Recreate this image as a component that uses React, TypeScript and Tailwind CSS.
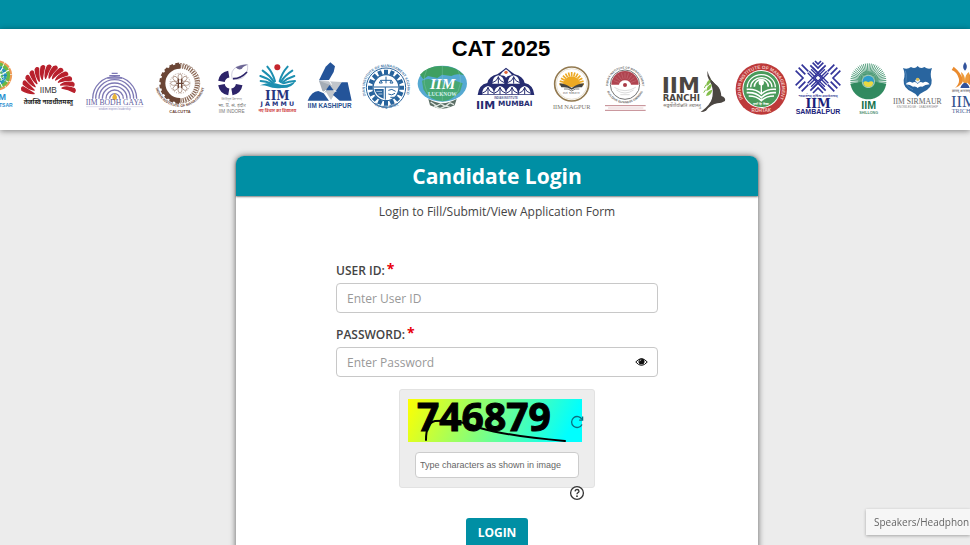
import { useState } from 'react'
import type { ReactNode } from 'react'

const polar = (cx: number, cy: number, r: number, deg: number) => {
  const a = (deg * Math.PI) / 180
  return `${(cx + r * Math.cos(a)).toFixed(1)} ${(cy + r * Math.sin(a)).toFixed(1)}`
}

const steps = (count: number) => Array.from({ length: count }, (_, i) => i)

// Straight spokes between two radii, from one angle to another
const spokes = (cx: number, cy: number, r1: number, r2: number, from: number, to: number, count: number) =>
  steps(count)
    .map((i) => {
      const deg = from + ((to - from) * i) / (count - 1)
      return `M${polar(cx, cy, r1, deg)}L${polar(cx, cy, r2, deg)}`
    })
    .join('')

interface LogoProps {
  name: string
  viewBox: string
  className: string
  children: ReactNode
}

const Logo = ({ name, viewBox, className, children }: LogoProps) => (
  <svg role="img" aria-label={name} viewBox={viewBox} className={`h-14 shrink-0 ${className}`}>
    {children}
  </svg>
)

const SANS = "'Liberation Sans', Arial, sans-serif"
const WIDE = "'DejaVu Sans', sans-serif"
const SERIF = "'Liberation Serif', serif"
const SLAB = "'DejaVu Serif', serif"

const Amritsar = () => (
  <Logo name="IIM Amritsar" viewBox="-120 120 168 168" className="w-14">
    <circle cx="-9" cy="166" r="42" fill="none" stroke="#ee9a55" strokeWidth="7" strokeDasharray="18 2" />
    <circle cx="-9" cy="166" r="34" fill="none" stroke="#6cb944" strokeWidth="11" strokeDasharray="17 3" />
    <circle cx="-9" cy="166" r="25" fill="none" stroke="#2b9db5" strokeWidth="9" strokeDasharray="11 4" />
    <circle cx="-9" cy="166" r="15" fill="none" stroke="#68c26b" strokeWidth="7" strokeDasharray="7 3" />
    <path d={spokes(-9, 166, 16, 30, 0, 330, 12)} stroke="#1f7fb8" strokeWidth="3" />
    <text x="18" y="241" textAnchor="end" fontSize="27" fontWeight="bold" fontFamily={SANS} fill="#2a8fd0">IIM</text>
    <text x="38" y="262" textAnchor="end" fontSize="15" fontWeight="bold" fontFamily={SANS} fill="#2a8fd0">AMRITSAR</text>
  </Logo>
)

const Bangalore = () => (
  <Logo name="IIM Bangalore" viewBox="48 120 192 168" className="w-16">
    {steps(13).map((i) => {
      const deg = 183 + i * 14
      return (
        <path
          key={i}
          d={`M${polar(145, 217, 43, deg - 8)}Q${polar(145, 215, 58, deg - 10)} ${polar(145, 217, 79, deg + 1)}Q${polar(145, 215, 83, deg + 6)} ${polar(145, 217, 78, deg + 9)}Q${polar(145, 215, 60, deg + 2)} ${polar(145, 217, 43, deg - 8)}Z`}
          fill="#b8202c"
          stroke="#b8202c"
          strokeWidth="4"
          strokeLinejoin="round"
        />
      )
    })}
    <text x="145" y="219" textAnchor="middle" fontSize="25" fontFamily={SANS} fill="#333">IIMB</text>
    <text x="145" y="253" textAnchor="middle" fontSize="19" fontWeight="bold" fontFamily="'Noto Sans', sans-serif" fill="#222">तेजस्वि नावधीतमस्तु</text>
  </Logo>
)

const BodhGaya = () => (
  <Logo name="IIM Bodh Gaya" viewBox="240 120 204 168" className="w-[68px]">
    <g fill="none" stroke="#7d78b4" strokeWidth="4">
      {[15, 26, 37, 47, 57, 66].map((r) => (
        <path key={r} d={`M${344 - r} 236A${r} ${r} 0 0 1 ${344 + r} 236`} />
      ))}
      <path d="M322 174H366M328 167H360M335 160H353" />
    </g>
    <path d="M344 219q14 17 0 22q-14-5 0-22Z" fill="#e8b33a" />
    <text x="344" y="255" textAnchor="middle" fontSize="23" fontFamily={SERIF} fill="#625d9e">IIM BODH GAYA</text>
    <path d="M258 260H430" stroke="#9894c4" strokeWidth="1" />
    <text x="344" y="269" textAnchor="middle" fontSize="8" fontFamily={SANS} fill="#8d89bd">wisdom inspires leadership</text>
  </Logo>
)

const Calcutta = () => (
  <Logo name="IIM Calcutta" viewBox="444 120 192 168" className="w-16">
    <path d="M540 139A51 51 0 0 0 540 241" fill="none" stroke="#6b4636" strokeWidth="14" />
    <path d={spokes(540, 190, 50, 62, 98, 262, 10)} stroke="#6b4636" strokeWidth="12" />
    <path d="M540 139A51 51 0 0 1 540 241" fill="none" stroke="#8b6a58" strokeWidth="13" strokeDasharray="4 3" />
    <path d="M540 131A59 59 0 0 1 540 249" fill="none" stroke="#8b6a58" strokeWidth="3" strokeDasharray="6 3" />
    <g fill="none" stroke="#967565" strokeWidth="2">
      <circle cx="540" cy="190" r="30" strokeDasharray="3 4" />
      {steps(8).map((i) => (
        <ellipse key={i} cx="540" cy="171" rx="6" ry="9" transform={`rotate(${i * 45} 540 190)`} />
      ))}
    </g>
    <path d="M535 176v28M545 176v28M529 190h22" stroke="#6b4636" strokeWidth="4" />
    <path id="calcutta-arc" d="M465 186A75 75 0 0 0 615 186" fill="none" />
    <text fontSize="11" fontWeight="bold" fontFamily={SANS} fill="#6b4636">
      <textPath href="#calcutta-arc" startOffset="50%" textAnchor="middle">INDIAN INSTITUTE OF MANAGEMENT</textPath>
    </text>
    <text x="540" y="279" textAnchor="middle" fontSize="12" fontWeight="bold" fontFamily={SANS} fill="#6b4636">CALCUTTA</text>
  </Logo>
)

const Indore = () => (
  <Logo name="IIM Indore" viewBox="21 30 120 168" className="w-10">
    {[10, 100, 190].map((deg) => (
      <path
        key={deg}
        d={`M${polar(76, 99, 27, deg)}A27 27 0 0 1 ${polar(76, 99, 27, deg + 70)}`}
        fill="none"
        stroke="#2d2469"
        strokeWidth="20"
      />
    ))}
    <path d="M82 87Q74 62 96 50Q118 42 128 44Q130 72 112 84Q98 92 82 87Z" fill="#fff" stroke="#b9b6cf" strokeWidth="2" />
    <path d="M92 52Q112 42 128 44Q112 50 111 56Q100 62 92 52Z" fill="#6c6695" />
    <path d="M84 86Q106 87 126 66" fill="none" stroke="#2d2469" strokeWidth="5" />
    <text x="80" y="150" textAnchor="middle" fontSize="9" fontFamily="'Noto Sans', sans-serif" fill="#888">सिद्धिमूलं प्रबन्धनम्</text>
    <text x="81" y="171" textAnchor="middle" fontSize="15" fontFamily="'Noto Sans', sans-serif" fill="#777">भा. प्र. सं. इंदौर</text>
    <text x="80" y="189" textAnchor="middle" fontSize="14" fontFamily={SANS} fill="#777">IIM INDORE</text>
  </Logo>
)

const Jammu = () => (
  <Logo name="IIM Jammu" viewBox="141 30 150 168" className="w-[50px]">
    <circle cx="217" cy="52" r="9" fill="#c5262d" />
    <g fill="none" stroke="#1c8fb0" strokeWidth="6" strokeLinecap="round">
      <path d="M210 94Q204 70 187 50M224 94Q230 70 248 50" />
      <path d="M207 96Q194 76 173 62M227 96Q240 76 262 62" />
      <path d="M203 98Q188 84 166 78M231 98Q248 84 268 78" />
      <path d="M199 101Q184 94 167 93M235 100Q252 94 270 93" />
    </g>
    <path d="M165 106Q196 92 222 103Q246 110 272 92Q262 115 230 114Q206 117 188 109Q178 105 165 106Z" fill="#1c8fb0" />
    <text x="217" y="149" textAnchor="middle" fontSize="36" fontWeight="bold" fontFamily={SLAB} fill="#27357f">IIM</text>
    <text x="217" y="169" textAnchor="middle" fontSize="19" fontWeight="bold" fontFamily={WIDE} fill="#27357f">J A M M U</text>
    <text x="217" y="186" textAnchor="middle" fontSize="13" fontWeight="bold" fontFamily="'Noto Sans', sans-serif" fill="#cf4545">नए विचार का विद्यालय</text>
  </Logo>
)

const Kashipur = () => (
  <Logo name="IIM Kashipur" viewBox="291 30 168 168" className="w-14">
    <path d="M342 92L410 96L378 150Z" fill="#c0c5cb" />
    <path d="M342 92L377 106L360 128L352 122Z" fill="#a5adb6" />
    <path d="M376 37L390 49L386 66L372 90L342 91L362 50Z" fill="#245499" />
    <path d="M308 152Q320 124 340 123L356 130L372 152Z" fill="#245499" />
    <path d="M410 97H428L440 152H404L384 135L396 118Z" fill="#245499" />
    <path d="M374 105L386 121H362Z" fill="#245499" />
    <path d="M372 91L380 104M354 128L364 120M386 122L394 124" stroke="#fff" strokeWidth="3" />
    <text x="374" y="175" textAnchor="middle" fontSize="19" fontWeight="bold" fontFamily={SANS} fill="#29508f">IIM KASHIPUR</text>
  </Logo>
)

const Kozhikode = () => (
  <Logo name="IIM Kozhikode" viewBox="459 30 168 168" className="w-14">
    <g fill="none" stroke="#27639c">
      <circle cx="543" cy="113" r="59" strokeWidth="3" />
      <circle cx="543" cy="113" r="39" strokeWidth="4" />
      <path d={spokes(543, 113, 40, 54, 0, 337.5, 16)} strokeWidth="12" />
      <path d="M507 111H579M541 111V149M527 91H559M543 80V100M527 91l-4 8h9zM559 91l-4 8h9z" strokeWidth="3" />
      <path d="M550 121q10-7 22 3M550 132q10 6 20-2M556 142h12" strokeWidth="3" />
    </g>
    <path d="M508 117H536V146Q514 140 508 117Z" fill="#27639c" />
    <path d="M514 124H531M520 132H532" stroke="#fff" strokeWidth="2" />
    <path id="kozhikode-top" d="M482 134A64 64 0 1 1 604 134" fill="none" />
    <path id="kozhikode-base" d="M485 147A74 74 0 0 0 601 147" fill="none" />
    <g fontSize="11" fontWeight="bold" fontFamily={SANS} fill="#4b7dab">
      <text>
        <textPath href="#kozhikode-top" startOffset="50%" textAnchor="middle">INDIAN INSTITUTE OF MANAGEMENT KOZHIKODE</textPath>
      </text>
      <text>
        <textPath href="#kozhikode-base" startOffset="50%" textAnchor="middle">योगः कर्मसु कौशलम्</textPath>
      </text>
    </g>
  </Logo>
)

const Lucknow = () => (
  <Logo name="IIM Lucknow" viewBox="12 90 174 168" className="w-[58px]">
    <ellipse cx="97" cy="161" rx="74" ry="54" fill="#55a9d2" />
    <path d="M30 134Q52 108 92 108Q140 108 162 136Q140 128 124 138L96 134L82 144L54 138L40 148Z" fill="#3f9f62" />
    <path d="M36 152Q60 140 74 156L92 150L110 166L136 152L158 160L150 186Q120 214 97 214Q56 210 40 178Z" fill="#46a774" />
    <path d="M97 108V214M50 120Q30 160 62 204M144 120Q164 160 132 204" fill="none" stroke="#8fcfb8" strokeWidth="1" />
    <text x="98" y="177" textAnchor="middle" fontSize="46" fontStyle="italic" fontWeight="bold" fontFamily={SERIF} fill="#fff">IIM</text>
    <text x="97" y="198" textAnchor="middle" fontSize="16" fontWeight="bold" fontFamily={SERIF} fill="#d9f2f0">LUCKNOW</text>
    <path d="M55 207Q97 232 140 207L134 226Q97 246 60 226Z" fill="#5b6e65" />
    <path d="M62 216L80 228L92 221L106 229L120 218L132 224M72 228L90 236L108 228L120 232" fill="none" stroke="#dfe7e2" strokeWidth="4" />
  </Logo>
)

const domes: [number, number][] = [
  [265, 161],
  [311, 161],
  [234, 193],
  [270, 193],
  [306, 193],
  [344, 193],
]

const Mumbai = () => (
  <Logo name="IIM Mumbai" viewBox="186 90 210 168" className="w-[70px]">
    <path d="M203 195Q206 164 232 159Q236 139 262 133Q276 123 288 113Q300 123 314 133Q340 139 344 159Q370 164 373 195Z" fill="#262c70" />
    {domes.map(([x, y]) => (
      <g key={`${x}-${y}`}>
        <path d={`M${x - 18} ${y}Q${x - 17} ${y - 22} ${x} ${y - 25}Q${x + 17} ${y - 22} ${x + 18} ${y}Z`} fill="#fff" />
        <path d={`M${x - 18} ${y - 3}Q${x - 4} ${y - 7} ${x} ${y - 20}Q${x + 4} ${y - 7} ${x + 18} ${y - 3}M${x} ${y - 22}V${y}`} fill="none" stroke="#262c70" strokeWidth="3" />
      </g>
    ))}
    <path d="M270 136Q278 124 288 118Q298 124 306 136Q292 136 288 143Q284 136 270 136Z" fill="#fff" />
    <circle cx="288" cy="127" r="5" fill="#e0653a" />
    <text x="288" y="206" textAnchor="middle" fontSize="8" fontWeight="bold" fontFamily={SANS} fill="#555a90">INDIAN INSTITUTE</text>
    <text x="198" y="237" fontSize="33" fontWeight="bold" fontFamily={WIDE} fill="#262c70">IIM</text>
    <text x="264" y="228" fontSize="22" fontWeight="bold" fontFamily={WIDE} fill="#262c70">MUMBAI</text>
  </Logo>
)

const Nagpur = () => (
  <Logo name="IIM Nagpur" viewBox="396 90 174 168" className="w-[58px]">
    <circle cx="485" cy="162" r="51" fill="#fff" stroke="#92794f" strokeWidth="5" />
    <circle cx="485" cy="162" r="46" fill="none" stroke="#ddd2bb" strokeWidth="2" />
    <path d={spokes(485, 163, 24, 37, 180, 360, 13)} stroke="#eda923" strokeWidth="5" />
    <path d="M459 165A26 26 0 0 1 511 165L485 172Z" fill="#eda923" />
    <path d="M448 160Q470 162 485 174Q500 162 522 160L516 172Q498 170 485 179Q472 170 454 172Z" fill="#454543" />
    <path d="M462 177Q475 174 485 183Q495 174 508 177" fill="none" stroke="#454543" strokeWidth="2" />
    <text x="485" y="192" textAnchor="middle" fontSize="8" fontFamily={SANS} fill="#555">सत्यं च स्वाध्याय</text>
    <text x="485" y="238" textAnchor="middle" fontSize="19" fontFamily={SERIF} fill="#77716a">IIM NAGPUR</text>
  </Logo>
)

const Raipur = () => (
  <Logo name="IIM Raipur" viewBox="0 30 162 168" className="w-[54px]">
    <circle cx="75" cy="104" r="44" fill="#fff" stroke="#777" strokeWidth="3" />
    <path d="M34 104A41 41 0 0 1 116 104Z" fill="#b04450" />
    <path d={spokes(75, 104, 18, 36, 200, 340, 9)} stroke="#d8949b" strokeWidth="1" />
    <path d="M57 105A18 14 0 0 1 93 105Z" fill="#fff" />
    <circle cx="75" cy="105" r="6" fill="#a93b48" />
    <path d="M43 112Q75 132 107 112M49 120Q75 138 101 120M61 134h28" fill="none" stroke="#c9c9c9" strokeWidth="2" />
    <path id="raipur-top" d="M26 121A51 51 0 1 1 124 121" fill="none" />
    <path id="raipur-base" d="M18 116A59 59 0 0 0 132 116" fill="none" />
    <g fontSize="9" fontWeight="bold" fontFamily={SANS} fill="#666">
      <text>
        <textPath href="#raipur-top" startOffset="50%" textAnchor="middle">INDIAN INSTITUTE OF MANAGEMENT</textPath>
      </text>
      <text>
        <textPath href="#raipur-base" startOffset="50%" textAnchor="middle">BUILDING BUSINESS OWNERS</textPath>
      </text>
    </g>
    <path d="M15 167H137M15 181H137" stroke="#c0848b" strokeWidth="3" />
    <path d="M24 174H130" stroke="#d9b5b9" strokeWidth="2" />
  </Logo>
)

const Ranchi = () => (
  <Logo name="IIM Ranchi" viewBox="162 30 228 168" className="w-[76px]">
    <text x="185" y="128" fontSize="66" fontWeight="bold" fontFamily={WIDE} fill="#4b4642">IIM</text>
    <text x="188" y="153" fontSize="26" fontWeight="bold" fontFamily={WIDE} fill="#4b4642">RANCHI</text>
    <text x="190" y="172" fontSize="15" fontFamily="'Noto Sans', sans-serif" fill="#77716c">सङ्घर्षेणैवोन्नति तथास्तु</text>
    <path d="M322 62Q330 92 352 107Q362 116 364 138Q378 142 375 153Q364 160 352 160Q334 162 318 182Q309 187 302 186Q332 164 338 140Q342 112 328 92Q320 78 322 62Z" fill="#4b4642" />
    <path d="M330 88Q354 104 364 140L346 160L334 156Q346 120 330 88Z" fill="#4b4642" />
    <g fill="#83bd4a">
      <path d="M331 88Q318 94 319 108Q333 104 331 88Z" />
      <path d="M335 102Q320 106 319 123Q336 118 335 102Z" />
      <path d="M337 119Q322 121 318 138Q335 136 337 119Z" />
      <path d="M318 104l-5 10M317 119l-6 9" stroke="#83bd4a" strokeWidth="3" />
    </g>
  </Logo>
)

const Rohtak = () => (
  <Logo name="IIM Rohtak" viewBox="390 30 186 168" className="w-[62px]">
    <circle cx="484" cy="117" r="77" fill="#bd3a3a" />
    <circle cx="484" cy="117" r="57" fill="#fff" />
    <circle cx="484" cy="117" r="54" fill="#4a9a5b" />
    <g fill="none" stroke="#fff" strokeWidth="4">
      <path d="M442 112A42 38 0 0 1 526 112M452 112A32 29 0 0 1 516 112" />
      <path d="M463 110A21 21 0 0 1 505 110" strokeWidth="5" />
      <path d="M440 118Q468 116 484 132Q500 116 528 118M440 128Q468 126 484 143Q500 126 528 128M446 138Q470 138 484 152Q498 138 522 138" strokeWidth="5" />
      <path d="M484 94V130" />
    </g>
    <circle cx="484" cy="98" r="8" fill="#fff" />
    <text x="484" y="164" textAnchor="middle" fontSize="9" fontWeight="bold" fontFamily={SANS} fill="#fff">धर्मो हि विद्या</text>
    <path id="rohtak-top" d="M434 155A62 62 0 1 1 534 155" fill="none" />
    <g fontSize="14" fontWeight="bold" fontFamily={SANS} fill="#f3c9c4">
      <text>
        <textPath href="#rohtak-top" startOffset="50%" textAnchor="middle">INDIAN INSTITUTE OF MANAGEMENT</textPath>
      </text>
      <text x="484" y="187" textAnchor="middle">ROHTAK</text>
    </g>
  </Logo>
)

const Sambalpur = () => (
  <Logo name="IIM Sambalpur" viewBox="21 30 162 168" className="w-[54px]">
    <g fill="none" stroke="#33349a" strokeWidth="5">
      {[45, 135].map((deg) => (
        <path key={deg} d="M66 73H132M66 80H132M66 88H132M66 95H132" strokeWidth="4" transform={`rotate(${deg} 99 84)`} />
      ))}
      <path d="M76 46L99 69L122 46M83 38L99 54L115 38M90 33L99 42L108 33" />
      <path d="M76 122L99 99L122 122M84 129L99 114L114 129" />
      <path d="M32 62L54 84L32 106M41 53L61 73M41 115L61 95M50 44L70 64M50 124L70 104" />
      <path d="M166 62L144 84L166 106M157 53L137 73M157 115L137 95M148 44L128 64M148 124L128 104" />
    </g>
    <path d="M99 74L109 84L99 94L89 84Z" fill="#fff" stroke="#33349a" strokeWidth="4" />
    <text x="99" y="142" textAnchor="middle" fontSize="10" fontWeight="bold" fontFamily="'Noto Sans', sans-serif" fill="#5557a5">नवसर्जनम् शुचिता समावेशत्वम्</text>
    <text x="99" y="173" textAnchor="middle" fontSize="37" fontWeight="bold" fontFamily={SLAB} fill="#1b1e7a">IIM</text>
    <text x="99" y="191" textAnchor="middle" fontSize="21" fontWeight="bold" fontFamily={SANS} fill="#1b1e7a">SAMBALPUR</text>
  </Logo>
)

const Shillong = () => (
  <Logo name="IIM Shillong" viewBox="183 30 132 168" className="w-11">
    <path d={spokes(250, 94, 20, 54, 170, 370, 32)} stroke="#5ba383" strokeWidth="3" />
    <path d={spokes(250, 94, 20, 54, 10, 170, 44)} stroke="#318a60" strokeWidth="4" />
    <circle cx="250" cy="94" r="31" fill="#318a60" opacity="0.45" />
    <circle cx="250" cy="94" r="17" fill="#2e9dcc" />
    <path d="M235 97Q241 90 250 97Q259 90 265 97Q264 111 250 111Q236 111 235 97Z" fill="#e9d942" />
    <text x="251" y="178" textAnchor="middle" fontSize="32" fontWeight="bold" fontFamily={SANS} fill="#17734d">IIM</text>
    <text x="251" y="191" textAnchor="middle" fontSize="11" fontWeight="bold" fontFamily={SANS} fill="#4a8d70">SHILLONG</text>
  </Logo>
)

const Sirmaur = () => (
  <Logo name="IIM Sirmaur" viewBox="315 30 168 168" className="w-14">
    <path d="M354 54Q366 60 378 51Q390 58 398 48Q406 58 418 51Q430 60 441 54Q434 72 440 90Q442 114 416 125Q404 130 398 140Q392 130 380 125Q354 114 356 90Q362 72 354 54Z" fill="#29659f" />
    <path d="M361 62Q366 76 363 92Q362 110 384 119" fill="none" stroke="#5f92c2" strokeWidth="2" />
    <path d="M362 103Q370 90 382 98Q392 92 398 102Q404 92 414 98Q426 90 434 103Q420 104 412 110Q402 108 398 114Q394 108 384 110Q376 104 362 103Z" fill="#fff" />
    <path d="M390 92Q398 78 406 92L398 100Z" fill="#eef4fa" />
    <circle cx="398" cy="88" r="5" fill="#d8bd5a" />
    <text x="397" y="163" textAnchor="middle" fontSize="23" fontFamily={SERIF} fill="#666">IIM SIRMAUR</text>
    <text x="397" y="175" textAnchor="middle" fontSize="9" fontFamily={SANS} fill="#888">KNOWLEDGE · LEADERSHIP</text>
  </Logo>
)

const Trichy = () => (
  <Logo name="IIM Tiruchirappalli" viewBox="483 30 168 168" className="w-14">
    <path d="M540 36Q551 52 540 62Q529 52 540 36Z" fill="#31529b" />
    <path d="M506 50Q526 66 534 88Q536 104 510 114Q526 100 521 84Q516 66 500 60ZM574 50Q554 66 546 88Q544 104 570 114Q554 100 559 84Q564 66 580 60Z" fill="#ea8b2e" />
    <path d="M528 66Q540 74 540 92Q540 74 552 66Q556 92 546 100Q536 102 532 92Z" fill="#ee9b3b" />
    <path d="M526 114Q530 100 540 98Q550 100 554 114Z" fill="#31529b" />
    <text x="500" y="127" fontSize="10" fontWeight="bold" fontFamily={SANS} fill="#777">ज्ञानम् अनन्तम्</text>
    <text x="498" y="171" fontSize="50" fontFamily={SERIF} fill="#34548f">IIM</text>
    <text x="500" y="190" fontSize="19" fontFamily={SERIF} fill="#4c6799">TRICHY</text>
  </Logo>
)

const Header = () => (
  <header>
    <div className="h-[29px] bg-[#008fa4]" />
    <div className="relative bg-white pt-2 pb-3.5 shadow-[0_1px_6px_rgba(0,0,0,0.45)]">
      <h1 className="pl-8 text-center font-['Liberation_Sans',Arial,sans-serif] text-[22px] leading-[23px] font-bold text-black">
        CAT 2025
      </h1>
      <div className="-ml-10 flex overflow-hidden">
        <Amritsar />
        <Bangalore />
        <BodhGaya />
        <Calcutta />
        <Indore />
        <Jammu />
        <Kashipur />
        <Kozhikode />
        <Lucknow />
        <Mumbai />
        <Nagpur />
        <Raipur />
        <Ranchi />
        <Rohtak />
        <Sambalpur />
        <Shillong />
        <Sirmaur />
        <Trichy />
      </div>
    </div>
  </header>
)

const EyeIcon = () => (
  <svg viewBox="0 0 26 16" className="w-[13px]">
    <path d="M1.5 8Q13-5.5 24.5 8Q13 21.5 1.5 8Z" fill="#fff" stroke="#111" strokeWidth="2" />
    <circle cx="13" cy="7" r="6" fill="#111" />
    <path d="M9.5 6.5Q10 3.8 12.5 3.5" fill="none" stroke="#fff" strokeWidth="1.4" />
  </svg>
)

interface FieldProps {
  id: string
  label: string
  type: string
  placeholder: string
  children?: ReactNode
}

const Field = ({ id, label, type, placeholder, children }: FieldProps) => (
  <div>
    <label htmlFor={id} className="mb-0.5 flex h-5 items-center gap-0.5 text-xs font-semibold text-[#444]">
      {label}
      <span className="-mt-1 text-sm leading-5 font-bold text-[#e8000b]">*</span>
    </label>
    <div className="relative">
      <input
        id={id}
        type={type}
        placeholder={placeholder}
        className="block h-[30px] w-full rounded-[4px] border border-[#c8c8c8] bg-white px-2.5 text-xs text-[#444] placeholder:text-[#999]"
      />
      {children}
    </div>
  </div>
)

const Captcha = () => (
  <div className="relative mx-auto mt-3 w-[196px] rounded-[3px] border border-[#e2e2e2] bg-[#ededed] py-[9px] pr-3 pl-2">
    <div className="relative">
      <svg role="img" aria-label="Captcha" viewBox="0 0 174 43" className="block w-full">
        <defs>
          <linearGradient id="captcha-fill" x1="0" y1="0" x2="1" y2="0.12">
            <stop offset="0" stopColor="#ffff00" />
            <stop offset="1" stopColor="#00ffff" />
          </linearGradient>
        </defs>
        <rect width="174" height="43" fill="url(#captcha-fill)" />
        <text x="9" y="32" fontSize="39" fontWeight="700" fontFamily="'Open Sans', sans-serif" stroke="#000" strokeWidth="1">746879</text>
        <path d="M18 41Q18 24 27 22Q50 20 72 29Q100 37 157 42" fill="none" stroke="#000" strokeWidth="2" strokeLinecap="round" />
      </svg>
      <button type="button" aria-label="Refresh captcha" className="absolute top-4 -right-0.5">
        <svg viewBox="0 0 14 14" className="size-3.5" fill="none" stroke="#0c6f80">
          <path d="M12 9.5A5.5 5.5 0 1 1 12 4.5" strokeWidth="1.3" />
          <path d="M12.6 1.6V5.2H9.2" strokeWidth="1.3" />
        </svg>
      </button>
    </div>
    <input
      type="text"
      aria-label="Captcha text"
      placeholder="Type characters as shown in image"
      className="mt-2.5 ml-[7px] block h-[26px] w-[164px] rounded-[4px] border border-[#ccc] bg-white px-1 font-['Liberation_Sans',Arial,sans-serif] text-[9px] text-[#444] placeholder:text-[#666]"
    />
    <button type="button" aria-label="Captcha help" className="absolute right-[9px] -bottom-3.5">
      <svg viewBox="0 0 16 16" className="size-4">
        <circle cx="8" cy="8" r="6.4" fill="#fff" stroke="#333" strokeWidth="1.3" />
        <path d="M6 6.4Q6.1 4.5 8 4.5T10 6.2Q10 7.2 8.9 7.7Q8 8.2 8 9.2" fill="none" stroke="#333" strokeWidth="1.3" />
        <circle cx="8" cy="11.2" r="0.9" fill="#333" />
      </svg>
    </button>
  </div>
)

const LoginCard = () => {
  const [showPassword, setShowPassword] = useState(false)

  return (
    <section className="w-full max-w-[522px] rounded-t-lg bg-white pb-10 shadow-[0_0_6px_rgba(0,0,0,0.6)]">
      <h2 className="rounded-t-lg bg-[#008fa4] text-center text-[21px] leading-10 font-bold text-white shadow-[0_1px_2px_rgba(0,0,0,0.5)]">
        Candidate Login
      </h2>
      <p className="pt-1.5 text-center text-xs leading-5 text-[#444]">Login to Fill/Submit/View Application Form</p>
      <form className="mx-auto mt-[39px] max-w-[322px]" onSubmit={(e) => e.preventDefault()}>
        <div className="flex flex-col gap-3">
          <Field id="user-id" label="USER ID:" type="text" placeholder="Enter User ID" />
          <Field
            id="password"
            label="PASSWORD:"
            type={showPassword ? 'text' : 'password'}
            placeholder="Enter Password"
          >
            <button
              type="button"
              aria-label="Show password"
              onClick={() => setShowPassword(!showPassword)}
              className="absolute inset-y-0 right-2.5"
            >
              <EyeIcon />
            </button>
          </Field>
        </div>
        <Captcha />
        <button
          type="submit"
          className="mx-auto mt-[30px] block h-[30px] w-[62px] rounded-[3px] bg-[#008fa4] text-xs font-bold text-white"
        >
          LOGIN
        </button>
      </form>
    </section>
  )
}

export default function App() {
  return (
    <div className="h-screen overflow-hidden bg-[#ececec] font-['Open_Sans','Noto_Sans',sans-serif]">
      <Header />
      <main className="flex justify-center pt-[26px] pl-6">
        <LoginCard />
      </main>
      <div
        role="tooltip"
        className="fixed right-0 bottom-2.5 w-26 overflow-hidden bg-[#f6f6f6] pl-2 text-[10px] leading-[26px] whitespace-nowrap text-[#666] shadow-[0_1px_3px_rgba(0,0,0,0.3)]"
      >
        Speakers/Headphon
      </div>
    </div>
  )
}
